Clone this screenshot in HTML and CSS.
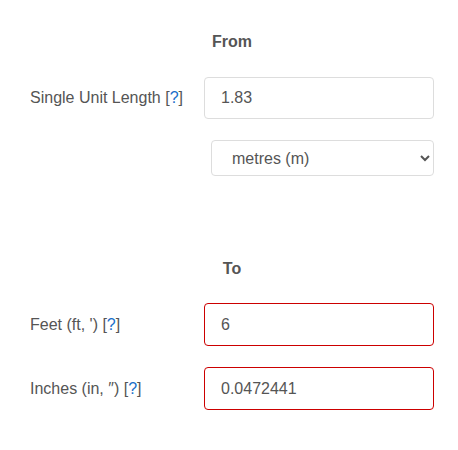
FILE: index.html
```html
<!DOCTYPE html>
<html lang="en">
<head>
    <meta charset="UTF-8">
    <title>Length Converter</title>
    <link rel="stylesheet" href="styles.css">
</head>
<body>
    <div class="converter">
        <h3 class="section-title">From</h3>

        <div class="row">
            <label class="row-label" for="singleUnit">Single Unit Length <span class="help">[<a href="#">?</a>]</span></label>
            <input class="field" id="singleUnit" type="text" value="1.83">
        </div>

        <div class="row">
            <span></span>
            <select class="unit-select" id="fromUnit">
                <option>metres (m)</option>
                <option>centimetres (cm)</option>
                <option>feet (ft)</option>
            </select>
        </div>

        <h3 class="section-title to-title">To</h3>

        <div class="row">
            <label class="row-label" for="feet">Feet (ft, ') <span class="help">[<a href="#">?</a>]</span></label>
            <input class="field result" id="feet" type="text" value="6">
        </div>

        <div class="row">
            <label class="row-label" for="inches">Inches (in, ″) <span class="help">[<a href="#">?</a>]</span></label>
            <input class="field result" id="inches" type="text" value="0.0472441">
        </div>
    </div>
</body>
</html>
```

FILE: styles.css
```css
body {
    margin: 0;
    background: #fff;
    font-family: 'Liberation Sans', Arial, sans-serif;
    font-size: 16px;
    color: #555;
}
.converter {
    width: 404px;
    margin-left: 30px;
    padding-top: 32px;
}
.section-title {
    margin: 0 0 25px;
    font-size: 16px;
    line-height: 20px;
    font-weight: bold;
    text-align: center;
    color: #555;
}
.to-title {
    margin-top: 83px;
    margin-bottom: 24px;
}
.row {
    display: grid;
    grid-template-columns: 174px 1fr;
    align-items: center;
    margin-bottom: 21px;
}
.row-label {
    color: #555;
}
.help a {
    color: #1a6fc9;
    text-decoration: none;
}
.field {
    box-sizing: border-box;
    width: 100%;
    height: 42px;
    padding: 0 16px;
    border: 1px solid #ddd;
    border-radius: 4px;
    font-family: inherit;
    font-size: 16px;
    color: #555;
    background: #fff;
    outline: none;
}
.field.result {
    height: 43px;
    border-color: #cc0000;
}
.unit-select {
    box-sizing: border-box;
    width: 223px;
    height: 36px;
    margin-left: 7px;
    padding: 0 0 0 16px;
    border: 1px solid #ddd;
    border-radius: 4px;
    font-family: inherit;
    font-size: 16px;
    color: #555;
    background: #fff;
}
```
